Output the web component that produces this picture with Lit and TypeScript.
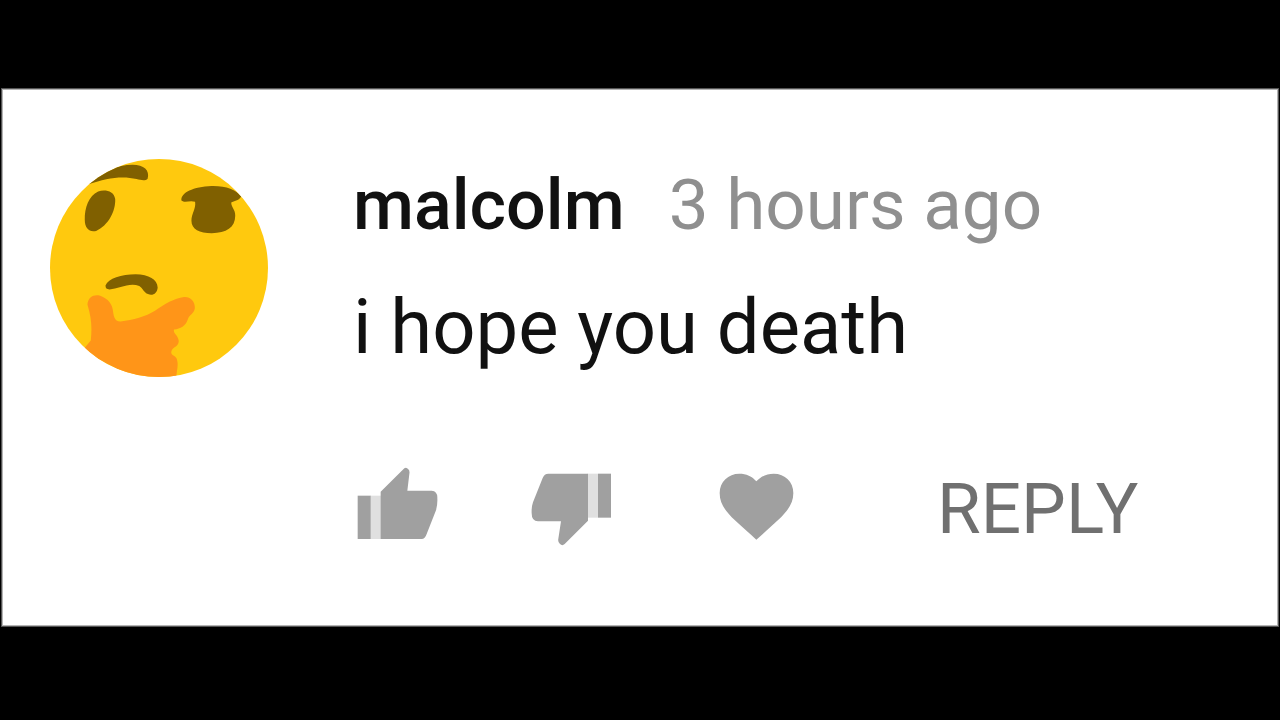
import { LitElement, html, css, svg } from "lit";
import { customElement, property } from "lit/decorators.js";

const avatar = svg`
  <svg class="face" viewBox="33 27 652 652" role="img" aria-label="malcolm">
    <defs><clipPath id="disc"><circle cx="359" cy="353" r="326" /></clipPath></defs>
    <g clip-path="url(#disc)">
      <rect x="33" y="27" width="652" height="652" fill="#ffc90e" />
      <path fill="#806000" d="M150 98C190 65 235 44 280 44C314 44 332 60 325 86C318 94 304 90 292 87C250 76 200 84 150 102Z" />
      <path fill="#806000" d="M177 124C198 118 224 122 228 147C230 183 207 227 171 242C152 247 137 236 137 209C136 174 149 136 177 124Z" />
      <path fill="#806000" d="M426 151C424 128 462 110 516 108C560 107 588 119 605 139C596 153 584 151 575 157C575 172 588 178 587 197C587 232 560 249 517 249C480 249 456 238 456 212C456 190 470 177 467 155C450 149 438 160 426 151Z" />
      <path fill="#806000" d="M199 405C207 385 247 372 289 372C329 373 354 388 355 411C354 427 341 438 326 431C314 427 311 414 300 407C269 395 238 417 211 417C202 416 199 413 199 405Z" />
      <path fill="#ff9518" d="M145 462C147 440 164 431 183 436C207 445 220 460 222 486C224 501 229 514 244 513C282 508 319 499 347 481C376 461 404 444 434 440C453 438 468 455 466 474C464 489 449 493 445 507C439 526 423 535 404 537C400 548 417 554 418 571C418 589 399 589 397 600C390 616 411 613 413 628C418 646 411 660 410 690H300L130 600L155 570C159 530 157 502 145 462Z" />
    </g>
  </svg>`;

const thumbUp = svg`
  <svg viewBox="42 36 264 264" aria-hidden="true">
    <path fill="#e0e0e0" d="M94 137H127V267H94Z" />
    <path d="M56 137H95V267H56Z" />
    <path d="M125 125L196 55Q202 50 208 58Q213 63 211 72L205 122H278Q296 123 295 145Q296 163 291 181L263 252Q258 267 248 267H125Z" />
  </svg>`;

const thumbDown = svg`
  <svg viewBox="570 36 264 264" aria-hidden="true">
    <path fill="#e0e0e0" d="M745 71H777V203H745Z" />
    <path d="M777 71H816V203H777Z" />
    <path d="M747 71H628Q616 71 611 84L582 157Q577 171 578 190Q578 214 597 214H666L658 266Q656 277 663 282Q670 289 677 282L747 212Z" />
  </svg>`;

const heart = svg`
  <svg viewBox="40 36 264 264" aria-hidden="true">
    <path d="M170 269L154 254C97 203 60 176 60 129C60 95 86 71 119 71C139 71 158 79 170 94C183 79 202 71 222 71C256 71 281 95 281 129C281 176 243 203 187 254Z" />
  </svg>`;

@customElement("app-root")
export class AppRoot extends LitElement {
  @property() author = "malcolm";
  @property() posted = "3 hours ago";
  @property() message = "i hope you death";

  static styles = css`
    :host {
      display: flex;
      flex-direction: column;
      box-sizing: border-box;
      min-height: 100vh;
      padding: 88px 1px 93px;
      background: #000;
      font-family: Roboto, sans-serif;
    }
    .card {
      flex: 1;
      display: flex;
      align-items: flex-start;
      gap: 85px;
      padding: 70px 48px;
      border: 1px solid #555;
      box-shadow: inset 0 0 0 1px #b4b4b4;
      background: #fff;
    }
    .face {
      display: block;
      flex: none;
      width: 218px;
      height: 218px;
    }
    .body {
      flex: 1;
      min-width: 0;
    }
    .head {
      display: flex;
      align-items: baseline;
      gap: 44px;
      line-height: 92px;
    }
    .name {
      color: #111;
      font-size: 70px;
      font-weight: 500;
      text-decoration: none;
    }
    .time {
      color: #8f8f8f;
      font-size: 71px;
      text-decoration: none;
    }
    .text {
      margin: 26px 0 0;
      color: #111;
      font-size: 76px;
      line-height: 100px;
    }
    .actions {
      display: flex;
      align-items: center;
      margin-top: 82px;
    }
    button {
      margin: 0;
      padding: 0;
      border: 0;
      background: none;
      font: inherit;
      cursor: pointer;
    }
    .icon {
      width: 88px;
      height: 88px;
      margin-right: 88px;
    }
    .icon svg {
      display: block;
      fill: #a0a0a0;
    }
    .love {
      margin-left: 8px;
      margin-right: 136px;
    }
    .reply {
      padding-top: 6px;
      color: #707070;
      font-size: 71px;
      line-height: 88px;
    }
  `;

  render() {
    return html`
      <article class="card">
        ${avatar}
        <div class="body">
          <header class="head">
            <a class="name" href="#author">${this.author}</a>
            <a class="time" href="#comment">${this.posted}</a>
          </header>
          <p class="text">${this.message}</p>
          <div class="actions">
            <button class="icon" aria-label="Like">${thumbUp}</button>
            <button class="icon" aria-label="Dislike">${thumbDown}</button>
            <button class="icon love" aria-label="Heart">${heart}</button>
            <button class="reply">REPLY</button>
          </div>
        </div>
      </article>
    `;
  }
}
